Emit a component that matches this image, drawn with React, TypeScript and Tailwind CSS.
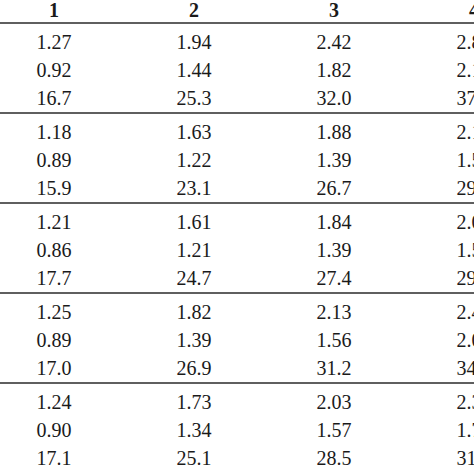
// Results table, partly cropped on the right: four numbered columns,
// five groups of three rows, each group closed by a grey rule.

const HEADERS = ["1", "2", "3", "4"];

// One entry per group; each row holds the four column values.
const GROUPS: string[][][] = [
  [
    ["1.27", "1.94", "2.42", "2.86"],
    ["0.92", "1.44", "1.82", "2.16"],
    ["16.7", "25.3", "32.0", "37.6"],
  ],
  [
    ["1.18", "1.63", "1.88", "2.14"],
    ["0.89", "1.22", "1.39", "1.57"],
    ["15.9", "23.1", "26.7", "29.8"],
  ],
  [
    ["1.21", "1.61", "1.84", "2.09"],
    ["0.86", "1.21", "1.39", "1.55"],
    ["17.7", "24.7", "27.4", "29.9"],
  ],
  [
    ["1.25", "1.82", "2.13", "2.43"],
    ["0.89", "1.39", "1.56", "2.01"],
    ["17.0", "26.9", "31.2", "34.6"],
  ],
  [
    ["1.24", "1.73", "2.03", "2.31"],
    ["0.90", "1.34", "1.57", "1.76"],
    ["17.1", "25.1", "28.5", "31.4"],
  ],
];

const COLS = "grid grid-cols-[124px_140px_140px_140px]";

export default function App() {
  return (
    <div
      className="w-[474px] h-[474px] overflow-hidden bg-white text-[#1a1a1a] text-[20px] leading-none"
      style={{ fontFamily: '"Liberation Serif", "Times New Roman", serif' }}
    >
      <div className="w-[544px]">
        {/* Header row */}
        <div className={`${COLS} h-[24px] border-b-2 border-[#5f5f5f] font-bold`}>
          {HEADERS.map((h, i) => (
            <div
              key={h}
              className={`flex items-center justify-center pb-[2px] ${i === 0 ? "pr-4" : ""}`}
            >
              {h}
            </div>
          ))}
        </div>

        {GROUPS.map((rows, g) => (
          <div
            key={g}
            className={`pt-[4px] ${g < GROUPS.length - 1 ? "border-b-2 border-[#5f5f5f]" : ""}`}
          >
            {rows.map((row, r) => (
              <div key={r} className={`${COLS} h-7`}>
                {row.map((v, i) => (
                  <div
                    key={i}
                    className={`flex items-center justify-center ${i === 0 ? "pr-4" : ""}`}
                  >
                    {v}
                  </div>
                ))}
              </div>
            ))}
          </div>
        ))}
      </div>
    </div>
  );
}
